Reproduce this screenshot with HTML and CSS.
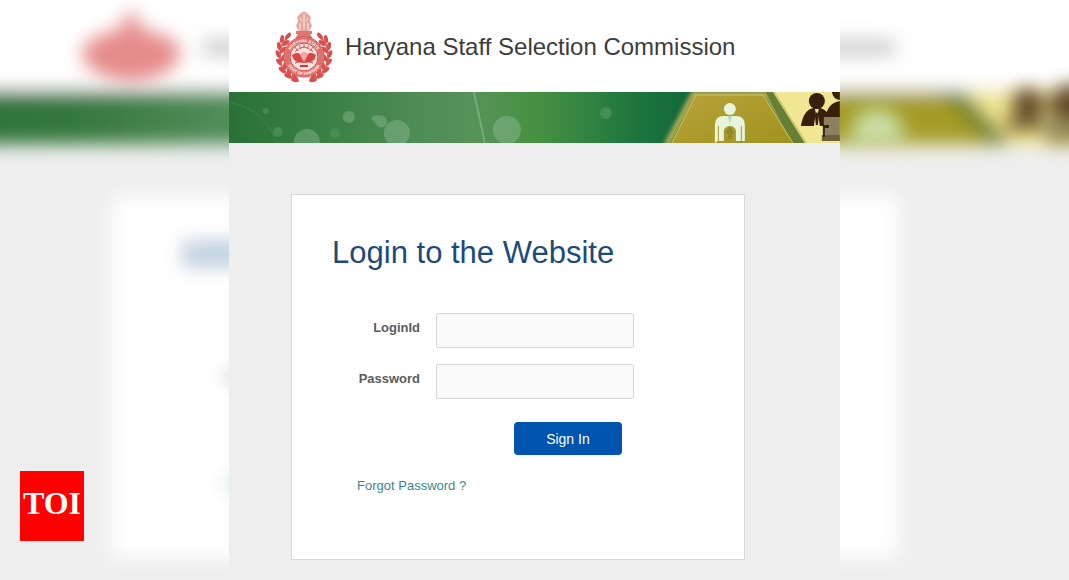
FILE: index.html
```
<!DOCTYPE html>
<html lang="en">
<head>
    <meta charset="UTF-8">
    <meta name="viewport" content="width=device-width, initial-scale=1.0">
    <title>Haryana Staff Selection Commission</title>
    <link rel="stylesheet" href="styles.css">
</head>
<body>
    <!-- soft stretched backdrop behind the page -->
    <svg class="backdrop" viewBox="0 0 1069 580" preserveAspectRatio="none" aria-hidden="true">
        <defs>
            <filter id="soft" x="-20%" y="-50%" width="140%" height="200%"><feGaussianBlur stdDeviation="9"/></filter>
            <linearGradient id="bandLeft">
                <stop offset="0" stop-color="#2b7238"/>
                <stop offset="0.12" stop-color="#37793f"/>
                <stop offset="0.24" stop-color="#518d59"/>
                <stop offset="0.5" stop-color="#4b9148"/>
                <stop offset="0.65" stop-color="#156b38"/>
            </linearGradient>
        </defs>
        <rect width="1069" height="580" fill="#eee"/>
        <g filter="url(#soft)">
            <rect x="-60" y="-60" width="1190" height="150" fill="#fff"/>
            <rect x="-60" y="90" width="1190" height="54" fill="url(#bandLeft)"/>
            <path d="M730 90H950L1000 144H730z" fill="#a49c28"/>
            <path d="M940 90H960L1010 144H990z" fill="#6d7d2c"/>
            <path d="M962 90H1130V144H1012z" fill="#f0e590"/>
            <rect x="112" y="196" width="786" height="362" fill="#fff"/>
        </g>
        <g filter="url(#soft)" opacity="0.800">
            <path d="M852 144v-16q4-18 25-20q21 2 26 20v16z" fill="#d3efc4"/>
            <circle cx="1028" cy="104" r="16" fill="#3e2409"/>
            <path d="M1000 130q26-32 52 0z" fill="#49300d"/>
            <circle cx="1071" cy="106" r="22" fill="#3e2409"/>
            <rect x="1046" y="122" width="50" height="22" fill="#81764d"/>
            <path d="M131 8l12 22q36 6 38 24q-8 24-50 28q-42-4-50-28q4-18 38-24z" fill="#df7070"/>
        </g>
        <g filter="url(#soft)" opacity="0.700">
            <path d="M203 39h60v17h-60zM780 39h115v17H780z" fill="#bbb"/>
            <path d="M182 240h80v28h-80z" fill="#a9bfd3"/>
            <path d="M226 372h30v10h-30z" fill="#a89e94"/>
            <path d="M226 479h30v10h-30z" fill="#9cc9c4"/>
        </g>
    </svg>

    <div class="layout">
        <div class="page">
            <header class="header">
                <svg class="emblem" viewBox="0 0 58 72" role="img" aria-label="Haryana emblem">
                    <defs>
                        <path id="arcTop" d="M14 46a15 15 0 0 1 30 0"/>
                        <path id="arcBottom" d="M11 46a18 18 0 0 0 36 0"/>
                        <g id="leaves">
                            <path d="M22 69Q4 62 5 43Q5 33 14 25" fill="none" stroke="#dc6a68" stroke-width="2"/>
                            <g fill="#d9504f">
                                <ellipse cx="13" cy="25" rx="2" ry="4" transform="rotate(40 13 25)"/>
                                <ellipse cx="7" cy="28" rx="2" ry="4" transform="rotate(10 7 28)"/>
                                <ellipse cx="11" cy="32" rx="2" ry="4" transform="rotate(55 11 32)"/>
                                <ellipse cx="4" cy="35" rx="2" ry="4" transform="rotate(-8 4 35)"/>
                                <ellipse cx="8" cy="39" rx="2" ry="4" transform="rotate(42 8 39)"/>
                                <ellipse cx="3" cy="43" rx="2" ry="4" transform="rotate(-20 3 43)"/>
                                <ellipse cx="8" cy="47" rx="2" ry="4" transform="rotate(25 8 47)"/>
                                <ellipse cx="4" cy="51" rx="2" ry="4" transform="rotate(-34 4 51)"/>
                                <ellipse cx="10" cy="55" rx="2" ry="4" transform="rotate(5 10 55)"/>
                                <ellipse cx="7" cy="59" rx="2" ry="4" transform="rotate(-48 7 59)"/>
                                <ellipse cx="14" cy="61" rx="2" ry="4" transform="rotate(-15 14 61)"/>
                                <ellipse cx="13" cy="65" rx="2" ry="4" transform="rotate(-64 13 65)"/>
                                <ellipse cx="20" cy="66" rx="2" ry="4" transform="rotate(-40 20 66)"/>
                                <ellipse cx="20" cy="69" rx="2" ry="4" transform="rotate(-78 20 69)"/>
                            </g>
                        </g>
                    </defs>
                    <!-- lion capital -->
                    <g fill="#e8a8a2">
                        <path d="M25 3q4-5 8 0l3 3-1 4 2 5-3 5H24l-3-5 2-5-1-4z"/>
                        <path d="M21 20h16v3H21zM23 23h12l3 5H20z" fill="#dc7770"/>
                    </g>
                    <path d="M29 3v15M25 7l2 3M33 7l-2 3M25 12v7M33 12v7" stroke="#fbe9e5" stroke-width="1" fill="none"/>
                    <use href="#leaves"/>
                    <use href="#leaves" transform="translate(58 0) scale(-1 1)"/>
                    <circle cx="29" cy="46" r="20" fill="#f8d6d2" stroke="#d64648" stroke-width="1"/>
                    <circle cx="29" cy="46" r="17" fill="none" stroke="#e06e6c" stroke-width="5"/>
                    <circle cx="29" cy="46" r="14" fill="#fae3df" stroke="#d33c3e" stroke-width="1"/>
                    <!-- lotus and rising sun -->
                    <path d="M20 41q9-10 18 0M23 40l-3-4M26 38l-2-4M29 37v-4M32 38l2-4M35 40l3-4" fill="none" stroke="#d95554" stroke-width="1"/>
                    <path d="M17 44q6-5 12 2q6-7 12-2q-1 8-12 8q-11 0-12-8z" fill="#d84545"/>
                    <path d="M25 44q4-7 8 0l-4 7z" fill="#f3aaa4"/>
                    <path d="M20 52l5-2M38 52l-5-2" stroke="#ce3739" stroke-width="1"/>
                    <path d="M25 55h8" stroke="#ce3739" stroke-width="2"/>
                    <text class="emblem-text"><textPath href="#arcTop" startOffset="50%">HARYANA STATE</textPath></text>
                    <text class="emblem-text"><textPath href="#arcBottom" startOffset="50%">GOVT OF HARYANA</textPath></text>
                </svg>
                <div class="site-name">Haryana Staff Selection Commission</div>
            </header>

            <svg class="banner" viewBox="0 0 611 51" preserveAspectRatio="xMaxYMid slice" aria-hidden="true">
                <defs>
                    <linearGradient id="green">
                        <stop offset="0" stop-color="#2a7137"/>
                        <stop offset="0.15" stop-color="#397f43"/>
                        <stop offset="0.33" stop-color="#518e58"/>
                        <stop offset="0.4" stop-color="#569359"/>
                        <stop offset="0.5" stop-color="#479141"/>
                        <stop offset="0.57" stop-color="#368642"/>
                        <stop offset="0.67" stop-color="#1c743d"/>
                        <stop offset="0.75" stop-color="#12693a"/>
                    </linearGradient>
                    <linearGradient id="gold" x2="1" y2="1">
                        <stop offset="0" stop-color="#b8a23a"/>
                        <stop offset="1" stop-color="#a0931f"/>
                    </linearGradient>
                    <filter id="glow"><feGaussianBlur stdDeviation="2"/></filter>
                </defs>
                <rect width="611" height="51" fill="url(#green)"/>
                <g fill="#a5c8aa" opacity="0.350">
                    <circle cx="78" cy="50" r="13"/>
                    <circle cx="49" cy="40" r="5" opacity="0.600"/>
                    <circle cx="37" cy="19" r="3" opacity="0.600"/>
                    <circle cx="106" cy="41" r="5" opacity="0.400"/>
                    <circle cx="120" cy="25" r="6"/>
                    <path d="M142 26q4-4 12-2q6 3 3 9q-5 5-9 0z"/>
                    <circle cx="168" cy="41" r="13"/>
                    <circle cx="278" cy="38" r="14"/>
                    <circle cx="377" cy="21" r="6" opacity="0.600"/>
                </g>
                <path d="M0 10Q35 16 48 51" fill="none" stroke="#4b9352" stroke-width="1" opacity="0.500"/>
                <path d="M245 0l11 51" stroke="#8dbb8d" stroke-width="2" opacity="0.600"/>

                <path d="M438 53L465 2h72l32 51" fill="none" stroke="#bcae55" stroke-width="6" filter="url(#glow)"/>
                <path d="M537 0h10l36 51h-20z" fill="#657f34"/>
                <path d="M443 51L467 3h67l30 48z" fill="url(#gold)"/>
                <path d="M443 51L467 3h67l30 48" fill="none" stroke="#d9c45b" stroke-width="1"/>
                <path d="M545 0h66v51h-34z" fill="#f1e694"/>
                <path d="M545 0l32 51" stroke="#c9cb6c" stroke-width="2"/>

                <!-- light figure -->
                <g fill="#e7f5dc">
                    <circle cx="501" cy="17" r="6"/>
                    <path d="M486 51V33q0-9 9-9h12q9 0 9 9v16h-3V34h-1v15h-5V38q-2-4-6-4t-6 4v11h-5V34h-1v15z"/>
                    <path d="M501 34l4 6-2 2v5h-4v-5l-2-2z" fill="#91882e"/>
                    <path d="M499 24h4l-2 8z" fill="#b9d5b4"/>
                </g>

                <!-- dark figures -->
                <g fill="#38200c">
                    <circle cx="588" cy="9" r="8"/>
                    <path d="M572 34q3-17 13-18h6q10 2 13 18z"/>
                    <path d="M603 0h8v8q-7-1-8-8z"/>
                    <path d="M597 24q2-13 14-15v17h-13z"/>
                </g>
                <path d="M586 17h4l-1 4 2 13h-6l2-13z" fill="#f1e694"/>
                <path d="M588 20l2 3-1 10h-2l-1-10z" fill="#38200c"/>
                <path d="M595 25h16v18h-16z" fill="#8b8060"/>
                <path d="M593 43h18v6h-18z" fill="#6d603b"/>
                <path d="M594 33h6v3h-4v9h-2z" fill="#38200c"/>
            </svg>

            <main class="login-card">
                <h1>Login to the Website</h1>
                <form action="#" method="post">
                    <div class="input-group">
                        <label for="loginid">LoginId</label>
                        <input type="text" id="loginid" name="loginid">
                    </div>
                    <div class="input-group">
                        <label for="password">Password</label>
                        <input type="password" id="password" name="password">
                    </div>
                    <div class="actions">
                        <button type="submit">Sign In</button>
                    </div>
                </form>
                <a class="forgot" href="#">Forgot Password ?</a>
            </main>
        </div>
    </div>

    <div class="toi">TOI</div>
</body>
</html>
```
FILE: styles.css
```
* {
    margin: 0;
    padding: 0;
    box-sizing: border-box;
}
body {
    position: relative;
    min-height: 100vh;
    font-family: "Liberation Sans", Arial, sans-serif;
    background-color: #eee;
}

/* blurred picture on both sides */
.backdrop {
    position: absolute;
    top: 0;
    left: 0;
    width: 100%;
    height: 100%;
}
.layout {
    position: relative;
    display: grid;
    grid-template-columns: 3fr 8fr 3fr;
    min-height: 100vh;
}
.page {
    grid-column: 2;
    min-width: 0;
    background-color: #eee;
}

.header {
    display: flex;
    align-items: center;
    gap: 12px;
    height: 92px;
    padding: 2px 0 0 46px;
    background-color: #fff;
}
.emblem {
    flex: none;
    width: 58px;
    height: 72px;
}
.emblem-text {
    font-size: 4px;
    font-weight: bold;
    fill: #fff;
    text-anchor: middle;
}
.site-name {
    font-size: 24px;
    line-height: 32px;
    color: #3c3c3c;
}
.banner {
    display: block;
    width: 100%;
    height: 51px;
}

.login-card {
    margin: 51px 95px 20px 62px;
    padding: 40px 110px 65px 40px;
    background-color: #fff;
    border: 1px solid #d9d9d9;
}
.login-card h1 {
    margin-bottom: 42px;
    font-size: 31px;
    font-weight: normal;
    line-height: 36px;
    color: #1c4a7c;
    white-space: nowrap;
}
.input-group {
    display: flex;
    gap: 16px;
    margin-bottom: 16px;
}
.input-group label {
    flex: none;
    width: 88px;
    padding-top: 7px;
    font-size: 13px;
    font-weight: bold;
    line-height: 16px;
    text-align: right;
    color: #5c5c5c;
}
.input-group input {
    flex: 1;
    min-width: 0;
    height: 35px;
    padding: 0 8px;
    font-size: 14px;
    background-color: #fafafa;
    border: 1px solid #d6d6d6;
    border-radius: 2px;
}
.actions {
    display: flex;
    justify-content: flex-end;
    padding: 7px 12px 23px 0;
}
.actions button {
    width: 108px;
    height: 33px;
    font-family: inherit;
    font-size: 14px;
    color: #fff;
    background-color: #0054ae;
    border: none;
    border-radius: 4px;
    cursor: pointer;
}
.forgot {
    display: block;
    margin-left: 25px;
    font-size: 13px;
    line-height: 16px;
    color: #3b8590;
    text-decoration: none;
}

/* corner logo */
.toi {
    position: absolute;
    left: 20px;
    bottom: 39px;
    width: 64px;
    height: 70px;
    font-family: "Liberation Serif", "Times New Roman", serif;
    font-size: 32px;
    font-weight: bold;
    line-height: 64px;
    text-align: center;
    color: #fff;
    background-color: #f00;
}
```
